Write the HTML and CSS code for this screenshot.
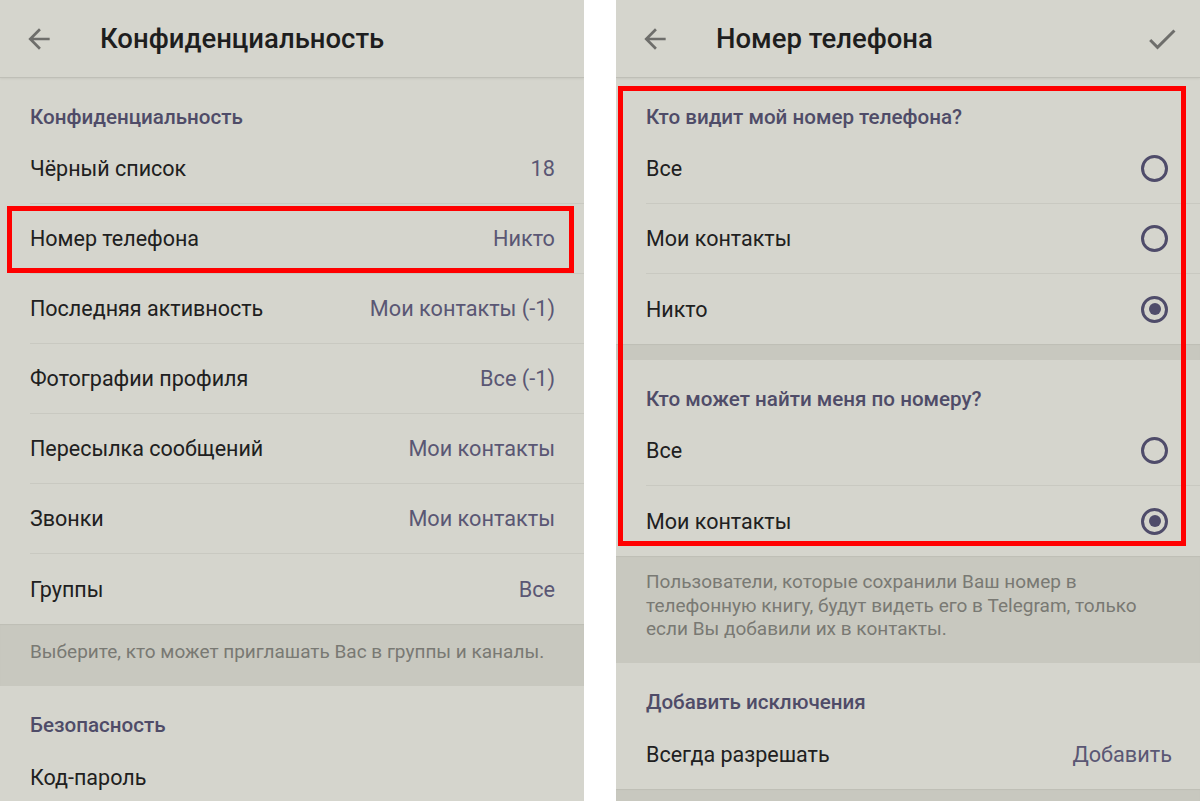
FILE: index.html
```html
<!DOCTYPE html>
<html lang="ru">
<head>
    <meta charset="UTF-8">
    <title>Конфиденциальность</title>
    <link rel="stylesheet" href="styles.css">
</head>
<body>
<div class="screens">
    <div class="panel">
        <div class="bar">
            <svg class="back" viewBox="0 0 24 24"><path d="M20 11H7.83l5.59-5.59L12 4l-8 8 8 8 1.41-1.41L7.83 13H20v-2z"/></svg>
            <h1 class="bar-title">Конфиденциальность</h1>
        </div>
        <div class="section">
            <h2 class="section-title">Конфиденциальность</h2>
            <div class="row"><span>Чёрный список</span><span class="value">18</span></div>
            <div class="row"><span>Номер телефона</span><span class="value">Никто</span></div>
            <div class="row"><span>Последняя активность</span><span class="value">Мои контакты (-1)</span></div>
            <div class="row"><span>Фотографии профиля</span><span class="value">Все (-1)</span></div>
            <div class="row"><span>Пересылка сообщений</span><span class="value">Мои контакты</span></div>
            <div class="row"><span>Звонки</span><span class="value">Мои контакты</span></div>
            <div class="row"><span>Группы</span><span class="value">Все</span></div>
        </div>
        <div class="info info-short">Выберите, кто может приглашать Вас в группы и каналы.</div>
        <div class="section">
            <h2 class="section-title">Безопасность</h2>
            <div class="row"><span>Код-пароль</span></div>
        </div>
        <div class="mark mark-left"></div>
    </div>

    <div class="panel">
        <div class="bar">
            <svg class="back" viewBox="0 0 24 24"><path d="M20 11H7.83l5.59-5.59L12 4l-8 8 8 8 1.41-1.41L7.83 13H20v-2z"/></svg>
            <h1 class="bar-title">Номер телефона</h1>
            <svg class="done" viewBox="0 0 24 24"><path d="M9 16.17L4.83 12l-1.42 1.41L9 19 21 7l-1.41-1.41z"/></svg>
        </div>
        <div class="section">
            <h2 class="section-title">Кто видит мой номер телефона?</h2>
            <div class="row"><span>Все</span><span class="radio"></span></div>
            <div class="row"><span>Мои контакты</span><span class="radio"></span></div>
            <div class="row"><span>Никто</span><span class="radio checked"></span></div>
        </div>
        <div class="gap"></div>
        <div class="section">
            <h2 class="section-title">Кто может найти меня по номеру?</h2>
            <div class="row"><span>Все</span><span class="radio"></span></div>
            <div class="row"><span>Мои контакты</span><span class="radio checked"></span></div>
        </div>
        <div class="info info-long">Пользователи, которые сохранили Ваш номер в<br>телефонную книгу, будут видеть его в Telegram, только<br>если Вы добавили их в контакты.</div>
        <div class="section">
            <h2 class="section-title">Добавить исключения</h2>
            <div class="row row-wide"><span>Всегда разрешать</span><span class="value">Добавить</span></div>
        </div>
        <div class="gap"></div>
        <div class="mark mark-right"></div>
    </div>
</div>
</body>
</html>
```

FILE: styles.css
```css
*{
    margin: 0;
    padding: 0;
    box-sizing: border-box;
}
body{
    background: #fff;
    font-family: Roboto, "Noto Sans", sans-serif;
    color: #202020;
}
.screens{
    display: flex;
    gap: 32px;
    height: 801px;
    overflow: hidden;
}
.panel{
    position: relative;
    width: 584px;
    height: 801px;
    overflow: hidden;
    background: #d5d5cd;
}
.bar{
    display: flex;
    align-items: center;
    height: 78px;
    padding-left: 23px;
    border-bottom: 1px solid #bfbfb7;
    box-shadow: 0 1px 2px rgba(0,0,0,0.06);
}
.back{
    width: 32px;
    height: 32px;
    fill: #6e6e6b;
    margin-right: 45px;
}
.bar-title{
    flex: 1;
    font-size: 27.5px;
    font-weight: 500;
    color: #1e1e1e;
}
.done{
    width: 36px;
    height: 36px;
    fill: #6e6e6b;
    margin-right: 20px;
}
.section-title{
    height: 56px;
    padding: 27px 0 0 30px;
    font-size: 20.6px;
    font-weight: 500;
    line-height: 24px;
    color: #4f4c68;
}
.row{
    display: flex;
    align-items: center;
    justify-content: space-between;
    height: 70px;
    margin-left: 30px;
    padding-right: 29px;
    font-size: 21.5px;
    border-bottom: 1px solid #c9c9c1;
}
.row:last-child{
    border-bottom: 0;
}
.row-wide{
    padding-right: 28px;
}
.value{
    color: #5a5774;
    font-size: 21.7px;
}
.radio{
    width: 27px;
    height: 27px;
    margin-right: 3px;
    border: 3px solid #4f4c6a;
    border-radius: 50%;
    display: flex;
    align-items: center;
    justify-content: center;
}
.radio.checked::after{
    content: "";
    width: 12px;
    height: 12px;
    border-radius: 50%;
    background: #4f4c6a;
}
.info{
    background: #c8c8bf;
    padding: 0 30px;
    font-size: 19px;
    color: #797973;
    box-shadow: inset 0 1px 1px rgba(0,0,0,0.05);
}
.info-short{
    height: 62px;
    line-height: 56px;
}
.info-long{
    height: 107px;
    padding-top: 14px;
    line-height: 23.5px;
}
.gap{
    height: 16px;
    background: #c8c8bf;
    box-shadow: inset 0 1px 1px rgba(0,0,0,0.05);
}
.mark{
    position: absolute;
    border: 5px solid #ff0000;
}
.mark-left{
    left: 7px;
    top: 206px;
    width: 567px;
    height: 67px;
}
.mark-right{
    left: 2px;
    top: 86px;
    width: 568px;
    height: 460px;
}
```
